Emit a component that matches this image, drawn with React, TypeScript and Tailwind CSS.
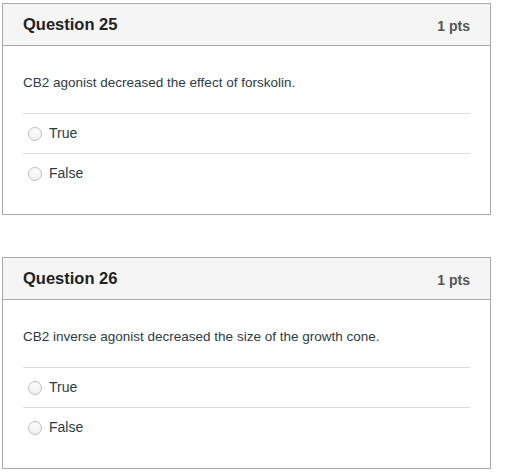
import React from "react";

type Question = {
  number: number;
  points: number;
  text: string;
  answers: string[];
};

const QUESTIONS: Question[] = [
  {
    number: 25,
    points: 1,
    text: "CB2 agonist decreased the effect of forskolin.",
    answers: ["True", "False"],
  },
  {
    number: 26,
    points: 1,
    text: "CB2 inverse agonist decreased the size of the growth cone.",
    answers: ["True", "False"],
  },
];

function Radio() {
  return (
    <span className="block w-[14px] h-[14px] rounded-full border border-[#bdbdbd] bg-gradient-to-b from-[#fdfdfd] to-[#f0f0f0] shrink-0" />
  );
}

function QuestionCard({ question }: { question: Question }) {
  return (
    <div className="w-[489px] border border-[#aaaaaa] bg-white">
      <div className="flex items-center justify-between h-[42px] px-5 bg-[#f5f5f5] border-b border-[#aaaaaa]">
        <h3 className="text-[16.5px] font-bold text-[#222]">
          Question {question.number}
        </h3>
        <span className="text-[14px] font-bold text-[#555] pt-[3px]">
          {question.points} pts
        </span>
      </div>
      <div className="px-5 pt-[27px] pb-[21px]">
        <p className="text-[13.5px] leading-5 text-[#2d3b45]">{question.text}</p>
        <div className="mt-[20px]">
          {question.answers.map((a) => (
            <label
              key={a}
              className="flex items-center gap-[7px] h-[40px] pl-[5px] border-t border-[#dddddd] text-[14px] text-[#2d3b45] cursor-pointer"
            >
              <Radio />
              <span>{a}</span>
            </label>
          ))}
        </div>
      </div>
    </div>
  );
}

export default function App() {
  return (
    <div
      className="min-h-screen bg-white pl-[2px] pt-[3px] flex flex-col gap-[42px]"
      style={{ fontFamily: '"Liberation Sans", Arial, sans-serif' }}
    >
      {QUESTIONS.map((q) => (
        <QuestionCard key={q.number} question={q} />
      ))}
    </div>
  );
}
